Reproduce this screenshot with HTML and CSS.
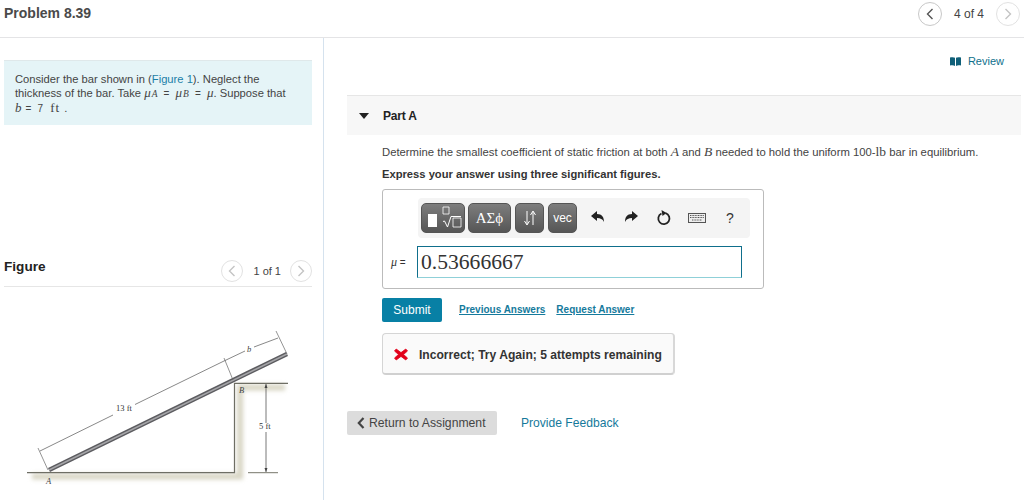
FILE: index.html
```html
<!DOCTYPE html>
<html lang="en">
<head>
<meta charset="utf-8">
<title>Problem 8.39</title>
<link rel="stylesheet" href="styles.css">
</head>
<body>
<header class="top">
  <h1 class="title">Problem 8.39</h1>
  <nav class="pager pager-top">
    <span class="circle"><svg width="10" height="14" viewBox="0 0 10 14"><path d="M7.500 2 2.500 7l5 5" class="chev"/></svg></span>
    <span class="count">4 of 4</span>
    <span class="circle off"><svg width="10" height="14" viewBox="0 0 10 14"><path d="M2.500 2l5 5-5 5" class="chev"/></svg></span>
  </nav>
</header>
<div class="main">
  <aside class="left">
    <div class="info">
      <p>Consider the bar shown in (<a href="#">Figure 1</a>). Neglect the<br>thickness of the bar. Take <i class="m">μ<span class="s">A</span></i> <span class="eq">=</span> <i class="m">μ<span class="s">B</span></i> <span class="eq">=</span> <i class="m">μ</i>. Suppose that<br><i class="m">b</i> <span class="eq eq-b">=</span> <span class="seven">7</span> <span class="m ft">ft</span> .</p>
    </div>
    <div class="fig-head">
      <h2>Figure</h2>
      <nav class="pager pager-fig">
        <span class="circle off"><svg width="10" height="14" viewBox="0 0 10 14"><path d="M7.500 2 2.500 7l5 5" class="chev"/></svg></span>
        <span class="count">1 of 1</span>
        <span class="circle off"><svg width="10" height="14" viewBox="0 0 10 14"><path d="M2.500 2l5 5-5 5" class="chev"/></svg></span>
      </nav>
    </div>
    <svg class="figure" width="320" height="213" viewBox="0 287 320 213">
      <defs><filter id="blur" x="-20%" y="-20%" width="140%" height="140%"><feGaussianBlur stdDeviation="2"/></filter></defs>
      <path d="M32 476.500H240V387.500H285" fill="none" stroke="#d8d5c4" stroke-width="6" filter="url(#blur)"/>
      <path d="M27 472.700H234.500V383.300H288" fill="none" stroke="#6e6e64" stroke-width="1.200"/>
      <path d="M248 472.700H278" stroke="#77776a" fill="none"/>
      <path d="M49 470 287 354" stroke="#5c5c60" stroke-width="4.500"/>
      <path d="M49 470 287 354" stroke="#a5a5a8" stroke-width="1.500"/>
      <path d="M38 448 48 470M224 358 233 380M276 331 287 354" stroke="#666" stroke-width=".7"/>
      <path d="M40 451 113 415M135 404.500 224 361M224 361 245 351M254 347 278 338" stroke="#555" stroke-width=".7" fill="none"/>
      <path d="M266 384V423M266 432V472" stroke="#555" stroke-width=".8"/>
      <path d="M266 384l-1.500 4h3zM266 472l-1.500-4h3z" fill="#444"/>
      <text x="116" y="411" class="fig-t">13 ft</text>
      <text x="259" y="429" class="fig-t">5 ft</text>
      <text x="247" y="352" class="fig-i">b</text>
      <text x="239" y="393" class="fig-i">B</text>
      <text x="46" y="484" class="fig-i">A</text>
    </svg>
  </aside>
  <main class="right">
    <div class="review-row">
      <a class="review" href="#"><svg width="11" height="9" viewBox="0 0 11 9"><path d="M0 .5c2-.5 4-.5 5 .3V9C4 8.200 2 8.200 0 8.500zM11 .5C9 0 7 0 6 .8V9c1-.8 3-.8 5-.5z" fill="#0f5f78"/></svg>Review</a>
    </div>
    <section class="part">
      <span class="tri"></span><span class="part-name">Part A</span>
    </section>
    <div class="body">
      <p class="q">Determine the smallest coefficient of static friction at both <i class="mm">A</i> and <i class="mm">B</i> needed to hold the uniform 100-<span class="mm">lb</span> bar in equilibrium.</p>
      <p class="ex">Express your answer using three significant figures.</p>
      <div class="answer">
        <div class="toolbar">
          <span class="tb tb-tpl">
            <span class="block"></span>
            <svg width="24" height="24" viewBox="0 0 24 24"><path d="M4 1h6v7H4zM14 12h8v9h-8z" fill="none" stroke="#fff" stroke-width=".8"/><path d="M4 15.500l1.500-.5 3 6L12 10.500h10" fill="none" stroke="#fff" stroke-width="1"/></svg>
          </span>
          <span class="tb tb-greek">ΑΣϕ</span>
          <span class="tb tb-arrows"><svg width="16" height="18" viewBox="0 0 16 18"><path d="M5 2v13M2.500 12 5 16l2.500-4M11 16V3M8.500 6 11 2l2.500 4" fill="none" stroke="#fff" stroke-width="1"/></svg></span>
          <span class="tb tb-vec">vec</span>
          <span class="tool tool-first"><svg width="16" height="16" viewBox="0 0 16 16"><path d="M1 6l6-5v3c5 0 7 3 7 8-1.500-3-3.500-4-7-4v3z" fill="#222"/></svg></span>
          <span class="tool"><svg width="16" height="16" viewBox="0 0 16 16"><path d="M15 6 9 1v3c-5 0-7 3-7 8 1.500-3 3.500-4 7-4v3z" fill="#222"/></svg></span>
          <span class="tool"><svg width="16" height="16" viewBox="0 0 16 16"><path d="M9.500 3.200a5.600 5.600 0 1 1-4 .3" fill="none" stroke="#222" stroke-width="1.800"/><path d="M5.500 0l5 3-4 3z" fill="#222"/></svg></span>
          <span class="tool"><svg width="18" height="10" viewBox="0 0 18 10"><rect x=".5" y=".5" width="17" height="9" fill="#eee" stroke="#555"/><path d="M2 2.500h14M2 4.500h14M4 7h10" stroke="#555" stroke-dasharray="1 .6"/></svg></span>
          <span class="tool help">?</span>
        </div>
        <div class="input-row">
          <span class="mu-label"><i>μ</i> =</span>
          <div class="input">0.53666667</div>
        </div>
      </div>
      <div class="actions">
        <button class="submit" type="button">Submit</button>
        <a class="act" href="#">Previous Answers</a>
        <a class="act" href="#">Request Answer</a>
      </div>
      <div class="feedback">
        <svg width="14" height="13" viewBox="0 0 14 13"><path d="M2.200 1 7 4.600 11.800 1 13.500 3 9.500 6.500 13.500 10 11.800 12 7 8.400 2.200 12 .5 10 4.500 6.500.5 3z" fill="#e2001a" stroke="#e2001a" stroke-width=".8"/></svg>
        <span>Incorrect; Try Again; 5 attempts remaining</span>
      </div>
    </div>
    <div class="foot">
      <a class="return" href="#"><svg width="8" height="12" viewBox="0 0 8 12"><path d="M6.500 1 1.800 6l4.700 5" fill="none" stroke="#444" stroke-width="2.200"/></svg>Return to Assignment</a>
      <a class="provide" href="#">Provide Feedback</a>
    </div>
  </main>
</div>
</body>
</html>
```
FILE: styles.css
```css
* { box-sizing: border-box; }
html, body { margin: 0; height: 500px; overflow: hidden; background: #fff; }
body { font-family: "Liberation Sans", Arial, sans-serif; color: #333; }
a { text-decoration: none; color: #0f7391; }
p, h1, h2 { margin: 0; }
.top { height: 38px; border-bottom: 1px solid #e4e4e6; display: flex; justify-content: space-between; padding: 0 4px 0 4px; }
.title { font-size: 14px; font-weight: bold; color: #4a4a4a; line-height: 27px; }
.pager { display: flex; align-items: center; }
.pager-top { height: 28px; }
.circle { width: 24px; height: 24px; border: 1px solid #c8c8c8; border-radius: 50%; display: flex; align-items: center; justify-content: center; color: #555; }
.chev { fill: none; stroke: #555; stroke-width: 1.400; }
.circle.off { border-color: #e2e2e2; }
.off .chev { stroke: #c4c4c4; }
.count { font-size: 12px; color: #444; margin: 0 12px; }
.main { display: flex; height: 462px; }
.left { width: 324px; flex: none; border-right: 1px solid #d5e2ee; padding: 22px 11px 0 4px; }
.info { height: 65px; background: #e5f4f7; border-top: 1px solid #dfe8ea; padding: 11px 10px 0 11px; font-size: 11.200px; line-height: 14px; color: #444; white-space: nowrap; }
.info a { color: #1b7fa8; }
.m { font-family: "Liberation Serif", serif; font-size: 13px; }
.s { font-size: 9.500px; margin-left: 1px; }
.eq { font-size: 10px; margin: 0 3px; }
.eq-b { margin: 0 1px; }
.seven { font-size: 10px; margin: 0 4px 0 2px; }
.ft { letter-spacing: 1px; margin-right: 1px; }
.fig-head { display: flex; justify-content: space-between; align-items: center; height: 38px; margin-top: 124px; border-bottom: 1px solid #e6e6e6; }
.fig-head h2 { font-size: 13.600px; font-weight: bold; color: #222; margin-bottom: 3px; }
.pager-fig { padding-top: 6px; }
.pager-fig .circle { width: 22px; height: 22px; }
.pager-fig .count { font-size: 11px; margin: 0 9px 0 10px; }
.figure { display: block; margin-left: -4px; }
.fig-t { font: 8.500px "Liberation Serif", serif; fill: #333; }
.fig-i { font: italic 8.500px "Liberation Serif", serif; fill: #444; }
.right { flex: 1; padding: 0 3px 0 23px; }
.review-row { display: flex; justify-content: flex-end; padding: 17px 17px 0 0; height: 57px; }
.review { font-size: 11px; color: #0f6f8c; display: flex; gap: 7px; align-items: center; height: 12px; }
.part { height: 40px; background: #f7f7f7; border-top: 1px solid #e6e6e6; display: flex; align-items: center; padding-left: 12px; }
.tri { width: 0; height: 0; border-left: 5px solid transparent; border-right: 5px solid transparent; border-top: 6px solid #222; margin-right: 14px; }
.part-name { font-size: 12px; font-weight: bold; color: #222; letter-spacing: -.2px; }
.body { padding: 10px 0 0 35px; }
.q { font-size: 11.300px; line-height: 14px; color: #444; white-space: nowrap; }
.mm { font-family: "Liberation Serif", serif; font-size: 13.500px; }
.ex { font-size: 11.200px; font-weight: bold; color: #333; line-height: 14px; margin-top: 8px; }
.answer { width: 382px; height: 100px; margin-top: 8px; border: 1px solid #bbb; border-radius: 3px; padding: 8px 8px 0 8px; }
.toolbar { width: 332px; height: 40px; margin-left: 27px; background: #f4f4f4; border-radius: 4px; display: flex; align-items: center; padding-left: 3px; gap: 3px; }
.tb { height: 30px; border-radius: 5px; background: linear-gradient(#7d7d7d, #565656); border: 1px solid #555; color: #fff; display: flex; align-items: center; justify-content: center; }
.tb-tpl { width: 44px; gap: 2px; padding-left: 5px; }
.block { width: 9px; height: 13px; background: #fff; margin-top: 5px; flex: none; }
.tb-tpl svg { flex: none; }
.tb-greek { width: 43px; font: 15px "Liberation Serif", serif; }
.tb-arrows { width: 29px; margin-left: 1px; }
.tb-vec { width: 29px; font-size: 12px; margin-left: 1px; }
.tool { width: 30px; display: flex; justify-content: center; align-items: center; color: #333; }
.tool-first { margin-left: 3px; }
.help { font-size: 14px; }
.input-row { display: flex; align-items: center; margin-top: 8px; gap: 8px; }
.mu-label { font-size: 10px; color: #333; width: 18px; white-space: nowrap; }
.mu-label i { font-family: "Liberation Serif", serif; font-size: 12px; }
.input { width: 325px; height: 32px; border: 1px solid #0f6f8c; border-bottom-color: #8fd0d8; font: 21.600px/30px "Liberation Serif", serif; color: #333; padding-left: 3px; }
.actions { display: flex; align-items: center; margin-top: 9px; }
.submit { width: 60px; height: 24px; background: #0880a5; border: none; border-radius: 2px; color: #fff; font: 12px "Liberation Sans", sans-serif; padding: 0; }
.act { font-size: 10px; font-weight: bold; text-decoration: underline; color: #157a9c; margin-bottom: 2px; }
.act:nth-of-type(1) { margin-left: 17px; }
.act + .act { margin-left: 11px; }
.feedback { width: 293px; height: 42px; margin-top: 11px; border: 1px solid #d5d5d5; border-bottom: 2px solid #d0d0d0; border-right: 2px solid #d8d8d8; border-radius: 4px; background: #fafafa; display: flex; align-items: center; padding: 2px 0 0 11px; gap: 11px; font-size: 12.100px; font-weight: bold; color: #333; }
.foot { display: flex; align-items: center; margin-top: 36px; }
.return { width: 150px; height: 24px; background: #dcdcdc; border-radius: 2px; color: #444; font-size: 12.200px; display: flex; align-items: center; padding-left: 10px; gap: 4px; }
.provide { font-size: 12.100px; margin-left: 24px; color: #15799b; }
```
